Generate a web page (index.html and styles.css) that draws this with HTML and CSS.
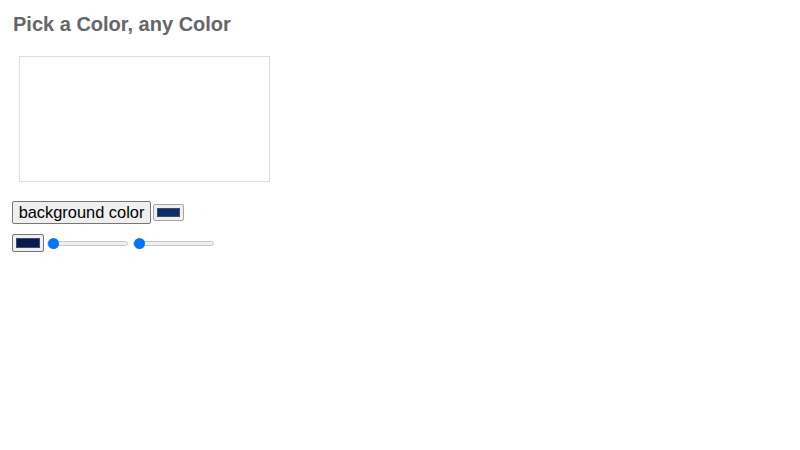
FILE: index.html
```html
<!DOCTYPE html>
<html>
<head>
<meta charset="utf-8">
<link rel="stylesheet" href="styles.css">
</head>
<body>
<h1 class="title">Pick a Color, any Color</h1>
<div class="canvas"></div>
<div class="row row-bg">
  <button class="bg-btn">background color</button>
  <input type="color" class="swatch swatch-bg" value="#0b2d6a">
</div>
<div class="row row-ctrl">
  <input type="color" class="swatch swatch-fg" value="#081a52">
  <input type="range" class="slider" min="0" max="100" value="0">
  <input type="range" class="slider" min="0" max="100" value="0">
</div>
</body>
</html>
```
FILE: styles.css
```css
body {
  margin: 12px;
  font-family: "Liberation Sans", Arial, sans-serif;
  background: #fff;
}
.title {
  font-size: 20px;
  font-weight: bold;
  color: #666;
  margin: 0 0 0 1px;
  line-height: 24px;
}
.canvas {
  width: 249px;
  height: 124px;
  border: 1px solid #ddd;
  margin: 20px 0 0 7px;
}
.row {
  display: flex;
  align-items: center;
}
.row-bg {
  margin-top: 19px;
  gap: 2px;
}
.row-ctrl {
  margin-top: 10px;
  gap: 4px;
}
.bg-btn {
  font-family: "Liberation Sans", Arial, sans-serif;
  font-size: 16.4px;
  width: 139px;
  height: 23px;
  padding: 0;
  margin: 0;
  border: 1px solid #767676;
  border-radius: 2px;
  background: #efefef;
  color: #000;
  line-height: 21px;
  text-align: center;
  white-space: nowrap;
}
.swatch {
  -webkit-appearance: none;
  appearance: none;
  margin: 0;
  padding: 3px;
  border-radius: 2px;
  background: #efefef;
  box-sizing: border-box;
}
.swatch-bg {
  width: 31px;
  height: 17px;
  border: 1px solid #a5a5a5;
}
.swatch-fg {
  width: 32px;
  height: 18px;
  border: 1px solid #767676;
}
.swatch::-webkit-color-swatch-wrapper {
  padding: 0;
}
.swatch::-webkit-color-swatch {
  border: 1px solid #4a4a5a;
}
.slider {
  -webkit-appearance: none;
  appearance: none;
  width: 81px;
  height: 11px;
  margin: 0 0 0 -1px;
  background: transparent;
}
.slider + .slider {
  margin-left: 1px;
}
.slider::-webkit-slider-runnable-track {
  height: 5px;
  border: 1px solid #c8c8c8;
  border-radius: 3px;
  background: #efefef;
  box-sizing: border-box;
}
.slider::-webkit-slider-thumb {
  -webkit-appearance: none;
  appearance: none;
  width: 11px;
  height: 11px;
  margin-top: -4px;
  border-radius: 50%;
  background: #0075ff;
  border: none;
}
```
